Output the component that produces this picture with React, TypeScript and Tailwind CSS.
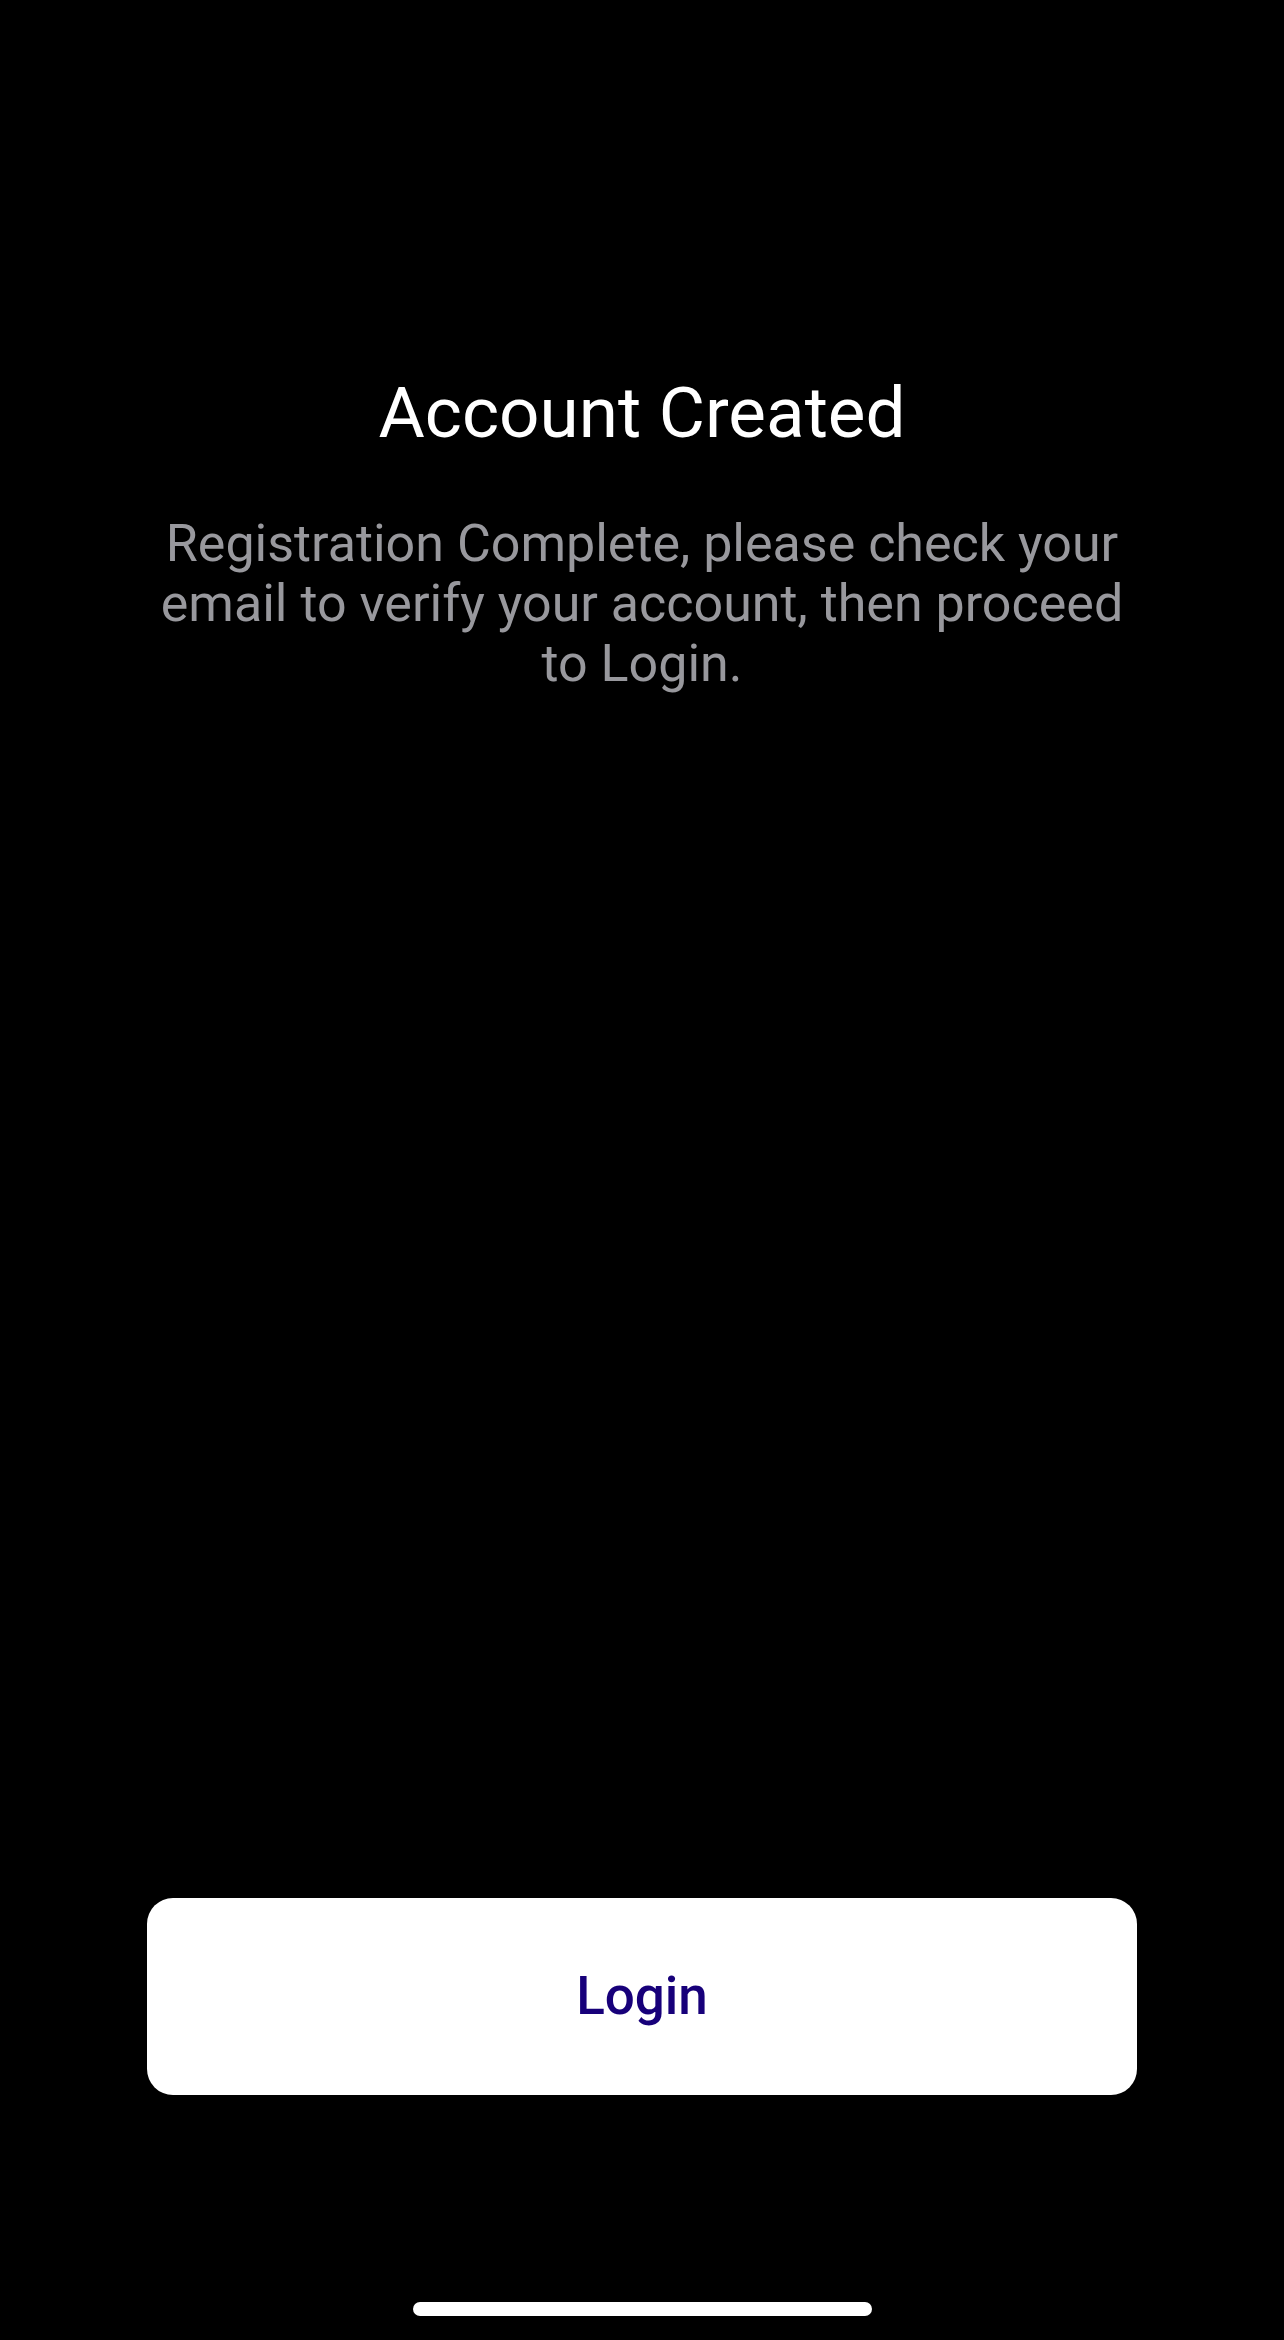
export default function App() {
  return (
    <div className="flex h-[2340px] w-full flex-col items-center bg-black font-['Roboto','Inter',sans-serif] antialiased">
      <h1 className="mt-[365px] text-[71px] leading-[96px] font-normal text-white">Account Created</h1>
      <p className="mt-[53px] w-[990px] text-center text-[52px] leading-[60px] text-[#98989d]">
        Registration Complete, please check your email to verify your account, then proceed to Login.
      </p>
      <div className="flex-1" />
      <button className="h-[197px] w-[990px] rounded-[26px] bg-white text-[53px] font-medium text-[#17007a]">
        Login
      </button>
      <div className="mt-[207px] mb-[24px] h-[14px] w-[459px] rounded-full bg-white" />
    </div>
  );
}
